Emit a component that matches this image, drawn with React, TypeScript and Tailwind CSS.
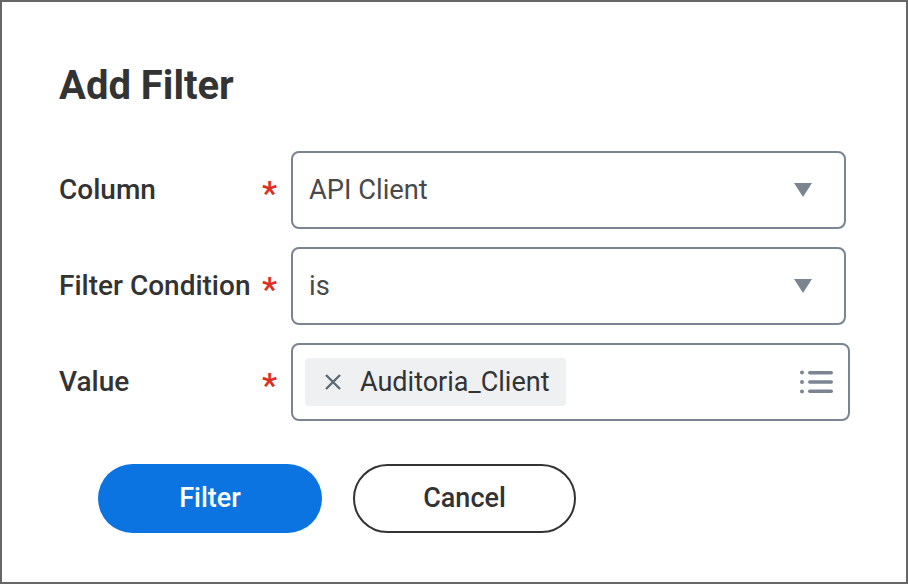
import React from "react";

function Caret() {
  return (
    <svg width="18" height="14" viewBox="0 0 18 14" className="shrink-0">
      <path d="M0 0 H18 L9 14 Z" fill="#7b8591" />
    </svg>
  );
}

function ListIcon() {
  return (
    <svg width="33" height="24" viewBox="0 0 33 24" className="shrink-0">
      <circle cx="2" cy="2.5" r="2" fill="#7b8591" />
      <circle cx="2" cy="12" r="2" fill="#7b8591" />
      <circle cx="2" cy="21.5" r="2" fill="#7b8591" />
      <rect x="8" y="1" width="25" height="3.5" rx="1.75" fill="#7b8591" />
      <rect x="8" y="10.25" width="25" height="3.5" rx="1.75" fill="#7b8591" />
      <rect x="8" y="19.5" width="25" height="3.5" rx="1.75" fill="#7b8591" />
    </svg>
  );
}

function Field({ label, children }: { label: string; children: React.ReactNode }) {
  return (
    <div className="flex h-[78px] items-center">
      <div className="flex w-[232px] shrink-0 items-center justify-between pr-[14px]">
        <span className="text-[28px] font-medium text-[#333333]">{label}</span>
        <span className="text-[34px] font-medium leading-none text-[#de2e21] mt-[6px]">*</span>
      </div>
      {children}
    </div>
  );
}

export default function App() {
  return (
    <div
      className="h-[584px] w-[908px] border-2 border-[#666666] bg-white pl-[57px] pt-[60px]"
      style={{ fontFamily: "Roboto, 'Liberation Sans', sans-serif" }}
    >
      <h1 className="text-[40px] font-bold leading-[48px] text-[#333333]">Add Filter</h1>

      <div className="mt-[41px] flex flex-col gap-[18px]">
        <Field label="Column">
          <div className="flex h-[78px] w-[555px] items-center justify-between rounded-[8px] border-2 border-[#7b8591] pl-[16px] pr-[32px]">
            <span className="text-[27.3px] text-[#494949]">API Client</span>
            <Caret />
          </div>
        </Field>
        <Field label="Filter Condition">
          <div className="flex h-[78px] w-[555px] items-center justify-between rounded-[8px] border-2 border-[#7b8591] pl-[16px] pr-[32px]">
            <span className="text-[27.3px] text-[#494949]">is</span>
            <Caret />
          </div>
        </Field>
        <Field label="Value">
          <div className="flex h-[78px] w-[559px] items-center justify-between rounded-[8px] border-2 border-[#7b8591] pl-[12px] pr-[15px]">
            <div className="flex h-[48px] items-center gap-[18px] rounded-[4px] bg-[#eef0f2] pl-[19px] pr-[17px]">
              <svg width="18" height="18" viewBox="0 0 18 18">
                <path d="M2 2 L16 16 M16 2 L2 16" stroke="#5e6a75" strokeWidth="2.4" strokeLinecap="butt" />
              </svg>
              <span className="text-[27px] text-[#333333]">Auditoria_Client</span>
            </div>
            <ListIcon />
          </div>
        </Field>
      </div>

      <div className="mt-[43px] flex gap-[31px] pl-[39px]">
        <button className="flex h-[69px] w-[224px] items-center justify-center rounded-full bg-[#0b74e1] text-[27px] font-medium text-white">
          Filter
        </button>
        <button className="flex h-[69px] w-[223px] items-center justify-center rounded-full border-2 border-[#333333] bg-white text-[27px] font-medium text-[#333333]">
          Cancel
        </button>
      </div>
    </div>
  );
}
